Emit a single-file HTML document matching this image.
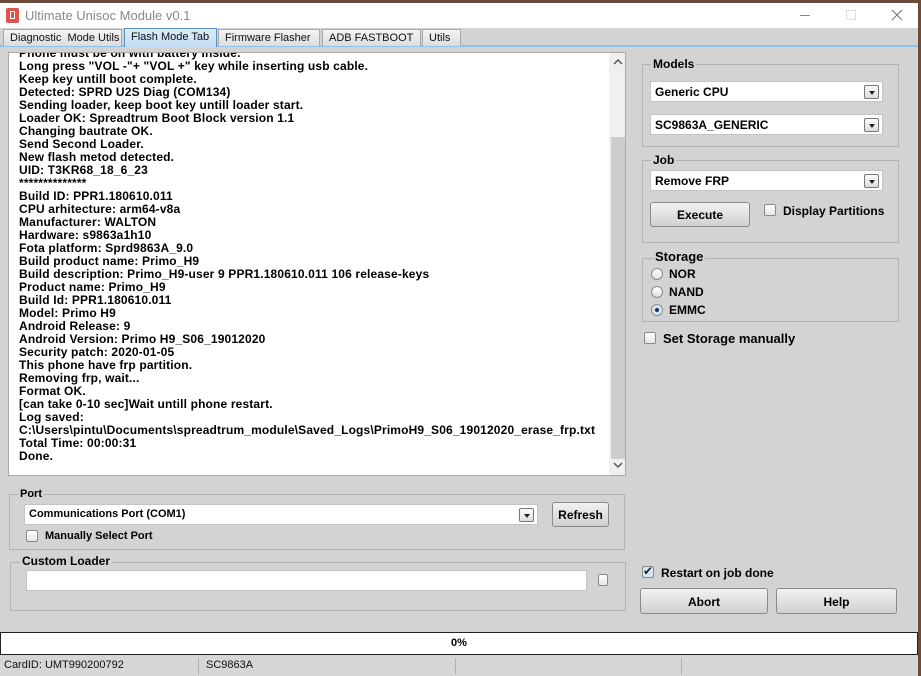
<!DOCTYPE html><html><head><style>
*{box-sizing:border-box;margin:0;padding:0}
body{width:921px;height:676px;overflow:hidden;background:#6b4a3a;font-family:"Liberation Sans",sans-serif;position:relative}
.a{position:absolute}
.win{left:0;top:3px;width:918px;height:673px;background:#d3d3d3}
.title{left:0;top:3px;width:918px;height:25px;background:#fff;font-size:13px;color:#888}
.tab{top:29px;height:17px;font-size:11px;color:#111;border:1px solid #a9a9a9;border-bottom:none;background:linear-gradient(#f4f4f4,#dcdcdc);padding:2px 6px 0;white-space:nowrap}
.b{font-weight:bold;font-size:12px;color:#000}
.grp{border:1px solid #b4b4b4}
.lg{background:#d3d3d3;padding:0 2px;font-weight:bold;font-size:12px}
.combo{background:#fff;border:1px solid #c4c4c4;height:21px;font-weight:bold;font-size:12px;padding:3px 4px}
.dd{position:absolute;right:3px;top:3px;width:15px;height:14px;border:1px solid #777;border-radius:2px;background:linear-gradient(#fafafa,#ddd)}
.dd:after{content:"";position:absolute;left:4px;top:5px;border-left:3px solid transparent;border-right:3px solid transparent;border-top:4px solid #222}
.btn{border:1px solid #8a8a8a;border-radius:3px;background:linear-gradient(#f2f2f2,#d0d0d0);font-weight:bold;font-size:12px;text-align:center}
.cb{width:12px;height:12px;border:1px solid #8a8a8a;border-radius:2px;background:linear-gradient(#fff,#e4e4e4)}
.rd{width:12px;height:12px;border:1px solid #8a8a8a;border-radius:50%;background:linear-gradient(#fff,#e0e0e0)}
#log{left:8px;top:52px;width:618px;height:424px;background:#fff;border:1px solid #aaa;overflow:hidden}
#log div.t{position:absolute;left:10px;top:-6px;font-weight:bold;font-size:12px;line-height:13px;letter-spacing:0.15px;color:#000;white-space:pre}
</style></head><body>
<div class="a win"></div>
<div class="a title"><div class="a" style="left:6px;top:5px;width:13px;height:15px;background:#e0524a;border-radius:2px"><div class="a" style="left:4px;top:3px;width:5px;height:8px;border:1px solid #fff"></div></div><span class="a" style="left:25px;top:5px">Ultimate Unisoc Module v0.1</span>
<div class="a" style="left:800px;top:12px;width:10px;height:1px;background:#888"></div>
<div class="a" style="left:846px;top:7px;width:10px;height:10px;border:1px solid #ddd"></div>
<svg class="a" style="left:891px;top:6px" width="12" height="12"><path d="M1 1L11 11M11 1L1 11" stroke="#777" stroke-width="1.1"/></svg></div>
<div class="a" style="left:0;top:45px;width:918px;height:2px;background:#8cc4ee"></div>
<div class="a tab" style="left:3px;width:119px">Diagnostic&nbsp; Mode Utils</div>
<div class="a tab" style="left:124px;top:28px;height:19px;width:93px;background:linear-gradient(#dcecfb,#c3def5);border-color:#5a8fc2">Flash Mode Tab</div>
<div class="a tab" style="left:218px;width:102px">Firmware Flasher</div>
<div class="a tab" style="left:322px;width:99px">ADB FASTBOOT</div>
<div class="a tab" style="left:422px;width:39px">Utils</div>
<div id="log" class="a"><div class="t">Phone must be on with battery inside.
Long press "VOL -"+ "VOL +" key while inserting usb cable.
Keep key untill boot complete.
Detected: SPRD U2S Diag (COM134)
Sending loader, keep boot key untill loader start.
Loader OK: Spreadtrum Boot Block version 1.1
Changing bautrate OK.
Send Second Loader.
New flash metod detected.
UID: T3KR68_18_6_23
**************
Build ID: PPR1.180610.011
CPU arhitecture: arm64-v8a
Manufacturer: WALTON
Hardware: s9863a1h10
Fota platform: Sprd9863A_9.0
Build product name: Primo_H9
Build description: Primo_H9-user 9 PPR1.180610.011 106 release-keys
Product name: Primo_H9
Build Id: PPR1.180610.011
Model: Primo H9
Android Release: 9
Android Version: Primo H9_S06_19012020
Security patch: 2020-01-05
This phone have frp partition.
Removing frp, wait...
Format OK.
[can take 0-10 sec]Wait untill phone restart.
Log saved:
C:\Users\pintu\Documents\spreadtrum_module\Saved_Logs\PrimoH9_S06_19012020_erase_frp.txt
Total Time: 00:00:31
Done.</div>
<div class="a" style="left:600px;top:0;width:17px;height:422px;background:#f0f0f0"></div>
<div class="a" style="left:602px;top:84px;width:14px;height:322px;background:#cdcdcd"></div>
<svg class="a" style="left:604px;top:5px" width="10" height="8"><path d="M1 6L5 2L9 6" fill="none" stroke="#555" stroke-width="1.5"/></svg>
<svg class="a" style="left:604px;top:408px" width="10" height="8"><path d="M1 2L5 6L9 2" fill="none" stroke="#555" stroke-width="1.5"/></svg>
</div>
<!-- right -->
<div class="a grp" style="left:642px;top:64px;width:257px;height:83px"></div>
<div class="a lg" style="left:651px;top:57px">Models</div>
<div class="a combo" style="left:650px;top:81px;width:233px">Generic CPU<div class="dd"></div></div>
<div class="a combo" style="left:650px;top:114px;width:233px">SC9863A_GENERIC<div class="dd"></div></div>
<div class="a grp" style="left:642px;top:160px;width:257px;height:83px"></div>
<div class="a lg" style="left:651px;top:153px">Job</div>
<div class="a combo" style="left:650px;top:170px;width:233px">Remove FRP<div class="dd"></div></div>
<div class="a btn" style="left:650px;top:202px;width:100px;height:25px;padding-top:5px">Execute</div>
<div class="a cb" style="left:764px;top:204px"></div>
<div class="a b" style="left:783px;top:204px">Display Partitions</div>
<div class="a grp" style="left:642px;top:258px;width:257px;height:64px"></div>
<div class="a lg" style="left:653px;top:249px;font-size:13px">Storage</div>
<div class="a rd" style="left:651px;top:268px"></div><div class="a b" style="left:669px;top:267px">NOR</div>
<div class="a rd" style="left:651px;top:286px"></div><div class="a b" style="left:669px;top:285px">NAND</div>
<div class="a rd" style="left:651px;top:304px;background:radial-gradient(#1a3a6a 25%,#dbe9f8 35%)"></div><div class="a b" style="left:669px;top:303px">EMMC</div>
<div class="a cb" style="left:644px;top:332px"></div><div class="a b" style="left:663px;top:331px;font-size:13px">Set Storage manually</div>
<!-- port -->
<div class="a grp" style="left:9px;top:494px;width:616px;height:56px"></div>
<div class="a lg" style="left:18px;top:488px;font-size:11px">Port</div>
<div class="a combo" style="left:24px;top:504px;width:514px;font-size:11px">Communications Port (COM1)<div class="dd"></div></div>
<div class="a btn" style="left:552px;top:502px;width:57px;height:25px;padding-top:5px;font-size:12px">Refresh</div>
<div class="a cb" style="left:26px;top:530px"></div><div class="a b" style="left:45px;top:530px;font-size:11px">Manually Select Port</div>
<div class="a grp" style="left:10px;top:562px;width:616px;height:49px"></div>
<div class="a lg" style="left:20px;top:554px;font-size:12px">Custom Loader</div>
<div class="a" style="left:26px;top:570px;width:561px;height:21px;background:#fff;border:1px solid #c4c4c4"></div>
<div class="a cb" style="left:598px;top:574px;width:10px"></div>
<div class="a cb" style="left:642px;top:566px;background:#d8e6f4"><span class="a" style="left:0;top:-3px;font-size:12px;color:#123">✔</span></div>
<div class="a b" style="left:661px;top:566px">Restart on job done</div>
<div class="a btn" style="left:640px;top:588px;width:128px;height:26px;padding-top:6px">Abort</div>
<div class="a btn" style="left:776px;top:588px;width:121px;height:26px;padding-top:6px">Help</div>
<!-- progress & status -->
<div class="a" style="left:0;top:632px;width:918px;height:23px;background:#fff;border:1px solid #222;text-align:center;font-weight:bold;font-size:11px;padding-top:4px">0%</div>
<div class="a" style="left:0;top:656px;width:918px;height:20px;background:#d6d6d6;font-size:11px;color:#111">
<span class="a" style="left:4px;top:3px">CardID: UMT990200792</span>
<div class="a" style="left:198px;top:2px;width:1px;height:16px;background:#b0b0b0"></div>
<span class="a" style="left:206px;top:3px">SC9863A</span>
<div class="a" style="left:455px;top:2px;width:1px;height:16px;background:#b0b0b0"></div>
<div class="a" style="left:681px;top:2px;width:1px;height:16px;background:#b0b0b0"></div>
</div>
</body></html>
